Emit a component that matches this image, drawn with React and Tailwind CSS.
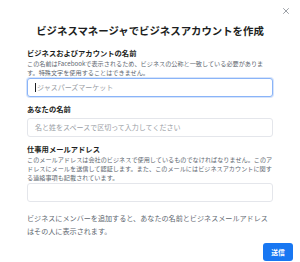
import { X } from 'lucide-react';

const font = { fontFamily: '"Noto Sans CJK JP", "Noto Sans", sans-serif' };

function Field({ label, desc, placeholder, focused }) {
  return (
    <div className="flex flex-col">
      <div className="text-[7.3px] font-bold leading-[10px] text-[#1c1e21]">{label}</div>
      {desc && (
        <div className="text-[6.15px] leading-[9px] text-[#606770] mt-[1px]">{desc}</div>
      )}
      <div
        className={`h-[19px] rounded-[3px] border bg-white flex items-center px-[7px] ${
          desc ? 'mt-[1px]' : 'mt-[4px]'
        } ${focused ? 'border-[#8ab4f8] shadow-[0_0_0_1px_#d6e4fb]' : 'border-[#e4e6eb]'}`}
      >
        {focused && <span className="w-px h-[9px] bg-[#1c1e21] mr-[1px]" />}
        <span className="text-[7px] text-[#9a9ea5]">{placeholder}</span>
      </div>
    </div>
  );
}

export default function App() {
  return (
    <div style={font} className="w-[300px] h-[262px] bg-white relative flex flex-col">
      <button className="absolute right-[9px] top-[6px] text-[#606770]">
        <X size={10} strokeWidth={1.5} />
      </button>
      <div className="pt-[24px] text-center text-[10.4px] font-bold text-[#1c1e21] leading-[14px]">
        ビジネスマネージャでビジネスアカウントを作成
      </div>
      <div className="px-[27px] mt-[10px] flex flex-col gap-[7px]">
        <Field
          label="ビジネスおよびアカウントの名前"
          desc={
            <>
              この名前はFacebookで表示されるため、ビジネスの公称と一致している必要がありま
              <br />
              す。特殊文字を使用することはできません。
            </>
          }
          placeholder="ジャスパーズマーケット"
          focused
        />
        <Field label="あなたの名前" placeholder="名と姓をスペースで区切って入力してください" />
        <Field
          label="仕事用メールアドレス"
          desc="このメールアドレスは会社のビジネスで使用しているものでなければなりません。このアドレスにメールを送信して認証します。また、このメールにはビジネスアカウントに関する連絡事項も記載されています。"
          placeholder=""
        />
        <div className="mt-[3px] text-[7.1px] leading-[13px] text-[#606770]">
          ビジネスにメンバーを追加すると、あなたの名前とビジネスメールアドレスはその人に表示されます。
        </div>
      </div>
      <div className="flex justify-end pr-[7px] mt-[5px]">
        <button className="w-[30px] h-[18px] rounded-[3px] bg-[#1877f2] text-white text-[6.8px] font-bold">
          送信
        </button>
      </div>
    </div>
  );
}
